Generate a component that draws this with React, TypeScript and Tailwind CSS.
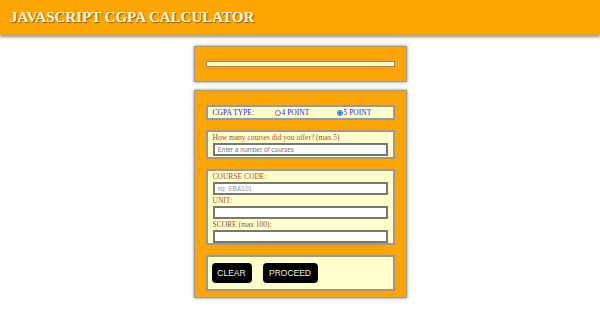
import { useState } from 'react';

const SERIF = { fontFamily: '"Liberation Serif", "Times New Roman", serif' };
const SANS = { fontFamily: '"Liberation Sans", Arial, sans-serif' };

export default function App() {
  const [type, setType] = useState('5');

  return (
    <div className="min-h-[318px] bg-white" style={SERIF}>
      <header className="h-[35px] bg-[#FFA500] px-[10px] flex items-center shadow-[0_2px_3px_rgba(0,0,0,0.45)]">
        <h1 className="text-[15px] font-bold text-[#FFF8DC] [text-shadow:1px_1px_1px_#7a5a20] leading-none">
          JAVASCRIPT CGPA CALCULATOR
        </h1>
      </header>

      <main className="w-[213px] mx-auto mt-[11px] flex flex-col gap-[8px]">
        <div className="h-[36px] bg-[#FFA500] border border-[#9a9a9a] shadow-[0_0_3px_rgba(0,0,0,0.5)] px-[11px] pt-[14px]">
          <div className="h-[6px] bg-[#FFFFCC] border border-[#888]" />
        </div>

        <div className="bg-[#FFA500] border border-[#9a9a9a] shadow-[0_0_3px_rgba(0,0,0,0.5)] px-[11px] pt-[14px] pb-[6px] flex flex-col gap-[10px]">
          <div className="h-[15px] bg-[#FFFFCC] border-2 border-[#999] flex items-center px-[5px] text-[7.5px] text-[#2222ee]">
            <span className="w-[62px]">CGPA TYPE:</span>
            <label className="flex items-center w-[62px]">
              <input type="radio" checked={type === '4'} onChange={() => setType('4')} className="w-[6px] h-[6px] m-0 mr-[1px]" />
              4 POINT
            </label>
            <label className="flex items-center">
              <input type="radio" checked={type === '5'} onChange={() => setType('5')} className="w-[6px] h-[6px] m-0 mr-[1px] accent-[#1a73e8]" />
              5 POINT
            </label>
          </div>

          <div className="bg-[#FFFFCC] border-2 border-[#999] px-[5px] pt-[1px] pb-[1px] text-[7.5px]">
            <p className="text-[#a0522d] leading-[10px]">How many courses did you offer? (max 5)</p>
            <input
              placeholder="Enter a number of courses"
              className="block w-full h-[13px] bg-white border-2 border-[#777] px-[3px] text-[6.5px] placeholder:text-[#777] outline-none"
              style={SANS}
            />
          </div>

          <div className="bg-[#FFFFCC] border-2 border-[#999] px-[5px] pt-0 pb-0 flex flex-col text-[7.5px]">
            <p className="text-[#a0522d] leading-[11px]">COURSE CODE:</p>
            <input
              placeholder="eg: EBA101"
              className="block w-full h-[13px] bg-white border-2 border-[#777] px-[3px] text-[6.5px] placeholder:text-[#999] outline-none"
              style={SANS}
            />
            <p className="text-[#a0522d] leading-[11px]">UNIT:</p>
            <input className="block w-full h-[13px] bg-white border-2 border-[#777] outline-none" />
            <p className="text-[#a0522d] leading-[11px]">SCORE (max 100):</p>
            <input className="block w-full h-[13px] bg-white border-2 border-[#777] outline-none" />
          </div>

          <div className="h-[36px] bg-[#FFFFCC] border-2 border-[#999] flex items-center gap-[11px] px-[4px]" style={SANS}>
            <button className="h-[20px] w-[40px] bg-black text-[#eee] text-[8.5px] rounded-[4px]">CLEAR</button>
            <button className="h-[20px] w-[55px] bg-black text-[#eee] text-[8.5px] rounded-[4px]">PROCEED</button>
          </div>
        </div>
      </main>
    </div>
  );
}
